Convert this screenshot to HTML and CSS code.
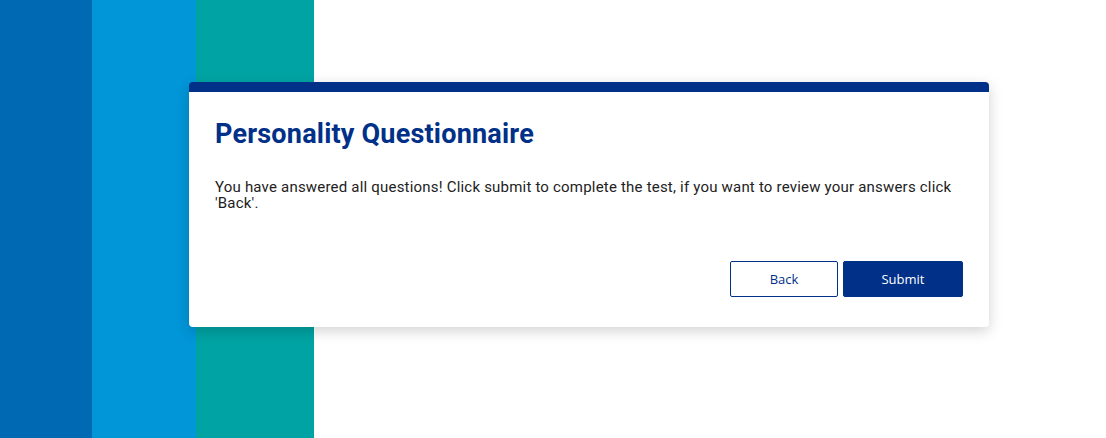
FILE: index.html
```html
<!DOCTYPE html>
<html>
<head>
<meta charset="utf-8">
<link rel="stylesheet" href="styles.css">
</head>
<body>
<div class="page">
  <div class="stripes">
    <div class="stripe s1"></div>
    <div class="stripe s2"></div>
    <div class="stripe s3"></div>
  </div>
  <div class="card">
    <h1 class="title">Personality Questionnaire</h1>
    <p class="text">You have answered all questions! Click submit to complete the test, if you want to review your answers click 'Back'.</p>
    <div class="actions">
      <button class="btn btn-back">Back</button>
      <button class="btn btn-submit">Submit</button>
    </div>
  </div>
</div>
</body>
</html>
```
FILE: styles.css
```css
html, body {
  margin: 0;
  padding: 0;
  background: #ffffff;
}
.page {
  position: relative;
  width: 1106px;
  height: 438px;
  overflow: hidden;
  font-family: Roboto, "Liberation Sans", sans-serif;
}
.stripes {
  display: flex;
  height: 438px;
}
.stripe { height: 100%; }
.s1 { width: 92px; background: #0069b4; }
.s2 { width: 104px; background: #0096d8; }
.s3 { width: 118px; background: #00a3a3; }
.card {
  position: absolute;
  left: 189px;
  top: 82px;
  width: 800px;
  height: 245px;
  box-sizing: border-box;
  background: #fff;
  border-top: 10px solid #003087;
  border-radius: 4px;
  box-shadow: 0 4px 14px rgba(0,0,0,0.18);
  padding: 0 26px 30px 26px;
  display: flex;
  flex-direction: column;
}
.title {
  margin: 27px 0 0 0;
  font-size: 27px;
  font-weight: 700;
  color: #003087;
  line-height: 30px;
  letter-spacing: 0.2px;
}
.text {
  margin: 30px 0 0 0;
  font-size: 15px;
  line-height: 16px;
  color: #222;
  letter-spacing: 0.2px;
}
.actions {
  margin-top: auto;
  display: flex;
  justify-content: flex-end;
  gap: 5px;
}
.btn {
  height: 36px;
  font-family: "Open Sans", "Liberation Sans", sans-serif;
  font-size: 13px;
  border-radius: 2px;
  cursor: pointer;
}
.btn-back {
  width: 108px;
  background: #fff;
  color: #003087;
  border: 1px solid #003087;
}
.btn-submit {
  width: 120px;
  background: #003087;
  color: #fff;
  border: 1px solid #003087;
}
```
